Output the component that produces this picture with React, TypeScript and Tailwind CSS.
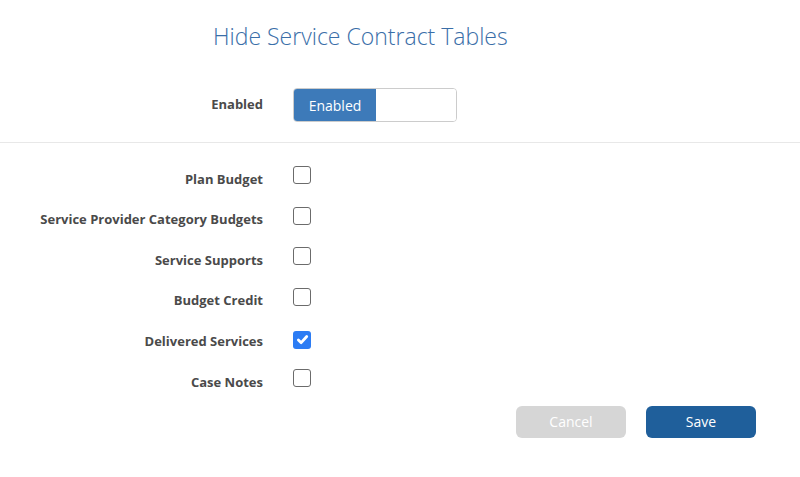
import React, { useState } from 'react';

const rows = [
  { label: 'Plan Budget', checked: false },
  { label: 'Service Provider Category Budgets', checked: false },
  { label: 'Service Supports', checked: false },
  { label: 'Budget Credit', checked: false },
  { label: 'Delivered Services', checked: true },
  { label: 'Case Notes', checked: false },
];

const Checkbox: React.FC<{ checked: boolean; onToggle: () => void }> = ({ checked, onToggle }) => (
  <button
    onClick={onToggle}
    className={
      checked
        ? 'w-[18px] h-[18px] rounded-[3px] bg-[#2c7cf4] flex items-center justify-center'
        : 'w-[18px] h-[18px] rounded-[3px] border border-[#6b6b6b] bg-white'
    }
  >
    {checked && (
      <svg width="13" height="13" viewBox="0 0 12 12">
        <path d="M2.2 6.4 L4.8 8.9 L9.9 3.2" fill="none" stroke="white" strokeWidth="2.6" strokeLinecap="round" strokeLinejoin="round" />
      </svg>
    )}
  </button>
);

const App: React.FC = () => {
  const [values, setValues] = useState(rows.map((r) => r.checked));
  const [enabled, setEnabled] = useState(true);

  return (
    <div className="w-[800px] h-[477px] bg-white font-['Open_Sans',sans-serif] text-[#4a4a4a]">
      {/* Title */}
      <div className="pt-[20px] pl-[213px] h-[88px]">
        <h1 className="text-[23px] font-light text-[#3a6ea8] leading-[32px]">Hide Service Contract Tables</h1>
      </div>

      {/* Enabled switch */}
      <div className="flex items-center h-[34px]">
        <div className="w-[263px] text-right text-[13px] font-bold">Enabled</div>
        <div
          className="ml-[30px] w-[164px] h-[34px] rounded-[4px] border border-[#cccccc] flex overflow-hidden cursor-pointer"
          onClick={() => setEnabled(!enabled)}
        >
          <div className={enabled ? 'w-[82px] bg-[#3d7ab9] text-white text-[14px] flex items-center justify-center' : 'w-[82px]'}>
            {enabled ? 'Enabled' : ''}
          </div>
          <div className="flex-1 bg-white" />
        </div>
      </div>

      <div className="mt-[20px] border-t border-[#e8e8e8]" />

      {/* Checkbox rows */}
      <div className="pt-[14px]">
        {rows.map((row, i) => (
          <div key={row.label} className="flex items-center h-[40.6px]">
            <div className="w-[263px] text-right text-[13px] font-bold pt-[4px]">{row.label}</div>
            <div className="ml-[30px]">
              <Checkbox
                checked={values[i]}
                onToggle={() => setValues(values.map((v, j) => (j === i ? !v : v)))}
              />
            </div>
          </div>
        ))}
      </div>

      {/* Buttons */}
      <div className="flex justify-end gap-[20px] pr-[44px] mt-[5px]">
        <button className="w-[110px] h-[32px] rounded-[6px] bg-[#d6d6d6] text-white text-[14px]">Cancel</button>
        <button className="w-[110px] h-[32px] rounded-[6px] bg-[#1f5f9b] text-white text-[14px]">Save</button>
      </div>
    </div>
  );
};

export default App;
